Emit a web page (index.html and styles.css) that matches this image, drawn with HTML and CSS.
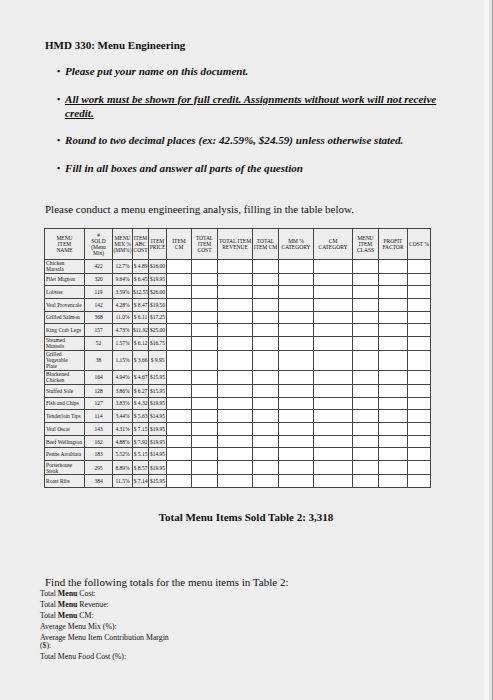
FILE: index.html
```html
<!DOCTYPE html>
<html lang="en">
<head>
<meta charset="utf-8">
<title>HMD 330: Menu Engineering</title>
<link rel="stylesheet" href="styles.css">
</head>
<body>
<div class="page">
  <main class="doc">
    <h1 class="title">HMD 330: Menu Engineering</h1>
    <ul class="rules">
      <li><span class="dot">•</span><span class="txt">Please put your name on this document.</span></li>
      <li><span class="dot">•</span><span class="txt under">All work must be shown for full credit. Assignments without work will not receive<br>credit.</span></li>
      <li><span class="dot">•</span><span class="txt">Round to two decimal places (ex: 42.59%, $24.59) unless otherwise stated.</span></li>
      <li><span class="dot">•</span><span class="txt">Fill in all boxes and answer all parts of the question</span></li>
    </ul>
    <p class="intro">Please conduct a menu engineering analysis, filling in the table below.</p>
    <table class="me">
      <colgroup>
        <col class="c-name"><col class="c-sold"><col class="c-mm"><col class="c-abc"><col class="c-price">
        <col class="c-cm"><col class="c-tcost"><col class="c-trev"><col class="c-tcm"><col class="c-mmcat">
        <col class="c-cmcat"><col class="c-class"><col class="c-pf"><col class="c-cost">
      </colgroup>
      <thead>
        <tr>
          <th>MENU<br>ITEM<br>NAME</th>
          <th>#<br>SOLD<br>(Menu<br>Mix)</th>
          <th>MENU<br>MIX %<br>(MM%)</th>
          <th>ITEM<br>ABC<br>COST</th>
          <th>ITEM<br>PRICE</th>
          <th>ITEM<br>CM</th>
          <th>TOTAL<br>ITEM<br>COST</th>
          <th>TOTAL ITEM<br>REVENUE</th>
          <th>TOTAL<br>ITEM CM</th>
          <th>MM %<br>CATEGORY</th>
          <th>CM<br>CATEGORY</th>
          <th>MENU<br>ITEM<br>CLASS</th>
          <th>PROFIT<br>FACTOR</th>
          <th>COST %</th>
        </tr>
      </thead>
      <tbody>
        <tr><td class="nm">Chicken<br>Marsala</td><td>422</td><td>12.7%</td><td>$&nbsp;4.89</td><td>$16.00</td><td></td><td></td><td></td><td></td><td></td><td></td><td></td><td></td><td></td></tr>
        <tr><td class="nm">Filet Mignon</td><td>320</td><td>9.64%</td><td>$&nbsp;6.45</td><td>$19.95</td><td></td><td></td><td></td><td></td><td></td><td></td><td></td><td></td><td></td></tr>
        <tr><td class="nm">Lobster</td><td>119</td><td>3.59%</td><td>$12.55</td><td>$26.00</td><td></td><td></td><td></td><td></td><td></td><td></td><td></td><td></td><td></td></tr>
        <tr><td class="nm">Veal Provencale</td><td>142</td><td>4.28%</td><td>$&nbsp;8.47</td><td>$19.50</td><td></td><td></td><td></td><td></td><td></td><td></td><td></td><td></td><td></td></tr>
        <tr><td class="nm">Grilled Salmon</td><td>368</td><td>11.0%</td><td>$&nbsp;6.11</td><td>$17.25</td><td></td><td></td><td></td><td></td><td></td><td></td><td></td><td></td><td></td></tr>
        <tr><td class="nm">King Crab Legs</td><td>157</td><td>4.73%</td><td>$11.92</td><td>$25.00</td><td></td><td></td><td></td><td></td><td></td><td></td><td></td><td></td><td></td></tr>
        <tr><td class="nm">Steamed<br>Mussels</td><td>52</td><td>1.57%</td><td>$&nbsp;6.12</td><td>$16.75</td><td></td><td></td><td></td><td></td><td></td><td></td><td></td><td></td><td></td></tr>
        <tr><td class="nm">Grilled<br>Vegetable<br>Plate</td><td>38</td><td>1.15%</td><td>$&nbsp;3.66</td><td>$&nbsp;9.95</td><td></td><td></td><td></td><td></td><td></td><td></td><td></td><td></td><td></td></tr>
        <tr><td class="nm">Blackened<br>Chicken</td><td>164</td><td>4.94%</td><td>$&nbsp;4.67</td><td>$15.95</td><td></td><td></td><td></td><td></td><td></td><td></td><td></td><td></td><td></td></tr>
        <tr><td class="nm">Stuffed Sole</td><td>128</td><td>3.86%</td><td>$&nbsp;6.27</td><td>$15.95</td><td></td><td></td><td></td><td></td><td></td><td></td><td></td><td></td><td></td></tr>
        <tr><td class="nm">Fish and Chips</td><td>127</td><td>3.83%</td><td>$&nbsp;4.32</td><td>$19.95</td><td></td><td></td><td></td><td></td><td></td><td></td><td></td><td></td><td></td></tr>
        <tr><td class="nm">Tenderloin Tips</td><td>114</td><td>3.44%</td><td>$&nbsp;5.63</td><td>$14.95</td><td></td><td></td><td></td><td></td><td></td><td></td><td></td><td></td><td></td></tr>
        <tr><td class="nm">Veal Oscar</td><td>143</td><td>4.31%</td><td>$&nbsp;7.15</td><td>$19.95</td><td></td><td></td><td></td><td></td><td></td><td></td><td></td><td></td><td></td></tr>
        <tr><td class="nm">Beef Wellington</td><td>162</td><td>4.88%</td><td>$&nbsp;7.92</td><td>$19.95</td><td></td><td></td><td></td><td></td><td></td><td></td><td></td><td></td><td></td></tr>
        <tr><td class="nm">Penne Arrabiata</td><td>183</td><td>5.52%</td><td>$&nbsp;5.15</td><td>$14.95</td><td></td><td></td><td></td><td></td><td></td><td></td><td></td><td></td><td></td></tr>
        <tr><td class="nm">Porterhouse<br>Steak</td><td>295</td><td>8.89%</td><td>$&nbsp;8.57</td><td>$19.95</td><td></td><td></td><td></td><td></td><td></td><td></td><td></td><td></td><td></td></tr>
        <tr><td class="nm">Roast Ribs</td><td>384</td><td>11.5%</td><td>$&nbsp;7.14</td><td>$15.95</td><td></td><td></td><td></td><td></td><td></td><td></td><td></td><td></td><td></td></tr>
      </tbody>
    </table>
    <p class="total">Total Menu Items Sold Table 2: 3,318</p>
    <p class="find">Find the following totals for the menu items in Table 2:</p>
    <div class="answers">
      <p>Total <b>Menu</b> Cost:</p>
      <p>Total <b>Menu</b> Revenue:</p>
      <p>Total <b>Menu</b> CM:</p>
      <p>Average Menu Mix (%):</p>
      <p>Average Menu Item Contribution Margin<br>($):</p>
      <p>Total Menu Food Cost (%):</p>
    </div>
  </main>
  <div class="strip"></div>
  <div class="edge"></div>
  <div class="rim"></div>
</div>
</body>
</html>
```
FILE: styles.css
```css
html, body {
  margin: 0;
  padding: 0;
}
body {
  background: #eeeeee;
  color: #111111;
  font-family: "Liberation Serif", "Times New Roman", serif;
  width: 493px;
  height: 700px;
  overflow: hidden;
}
.page {
  display: flex;
  height: 700px;
}
.doc {
  flex: 1;
  padding: 38px 0 0 40px;
  min-width: 0;
}
.strip {
  width: 5px;
  background: #f7f7f7;
}
.edge {
  width: 3px;
  background: #e2e2e2;
}
.rim {
  width: 1px;
  background: #a8a8a8;
}
.title {
  margin: 0 0 0 5px;
  font-size: 11px;
  line-height: 14px;
  font-weight: bold;
}
.rules {
  list-style: none;
  margin: 12px 0 0 17px;
  padding: 0;
  display: flex;
  flex-direction: column;
  gap: 13.5px;
  width: 400px;
}
.rules li {
  display: flex;
  font-size: 11.1px;
  line-height: 14px;
  font-weight: bold;
  font-style: italic;
}
.rules .dot {
  width: 8px;
  flex: none;
  font-style: normal;
  font-size: 9px;
}
.rules .under {
  text-decoration: underline;
  text-underline-offset: 1px;
}
.intro {
  margin: 27px 0 0 5px;
  font-size: 11px;
  line-height: 14px;
}
.me {
  margin: 12px 0 0 4px;
  width: 386px;
  table-layout: fixed;
  border-collapse: collapse;
  font-size: 5.5px;
  line-height: 6px;
}
.c-name { width: 40px; }
.c-sold { width: 28px; }
.c-mm { width: 20px; }
.c-abc { width: 16px; }
.c-price { width: 18px; }
.c-cm { width: 25px; }
.c-tcost { width: 26px; }
.c-trev { width: 35px; }
.c-tcm { width: 26px; }
.c-mmcat { width: 35px; }
.c-cmcat { width: 39px; }
.c-class { width: 26px; }
.c-pf { width: 29px; }
.c-cost { width: 23px; }
.me th,
.me td {
  border: 1px solid #444444;
  padding: 0.5px 0;
  text-align: center;
  vertical-align: middle;
  white-space: nowrap;
  overflow: hidden;
}
.me th {
  font-weight: normal;
  height: 29px;
  background: #eeeeee;
}
.me td {
  height: 10.7px;
  background: #ffffff;
}
.me td:nth-child(-n+5) {
  background: #eeeeee;
}
.me td.nm {
  text-align: left;
  padding-left: 1px;
}
.total {
  margin: 22px 0 0 5px;
  width: 402px;
  text-align: center;
  font-size: 11px;
  line-height: 14px;
  font-weight: bold;
}
.find {
  margin: 51px 0 0 5px;
  font-size: 11px;
  line-height: 14px;
}
.answers {
  margin-top: 1px;
  display: flex;
  flex-direction: column;
  gap: 2.5px;
}
.answers p {
  margin: 0;
  font-size: 7.8px;
  line-height: 8.5px;
}
```
